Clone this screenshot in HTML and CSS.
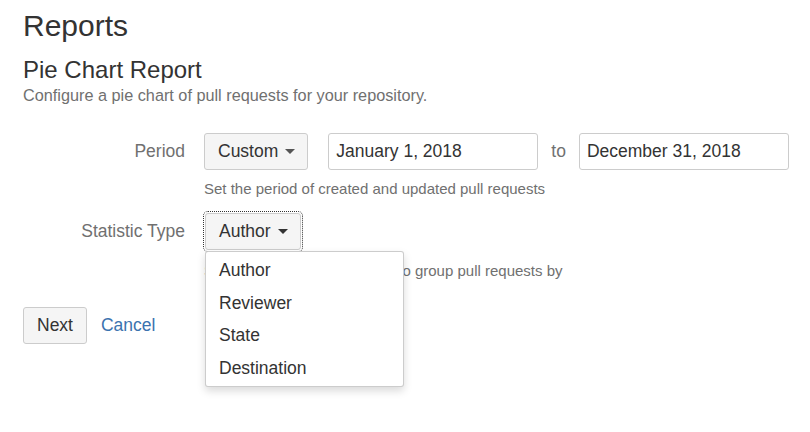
FILE: index.html
```html
<!DOCTYPE html>
<html>
<head>
<meta charset="utf-8">
<title>Reports</title>
<link rel="stylesheet" href="styles.css">
</head>
<body>
<div class="page">
  <h1 class="title">Reports</h1>
  <h3 class="subtitle">Pie Chart Report</h3>
  <p class="desc">Configure a pie chart of pull requests for your repository.</p>

  <form class="form">
    <div class="row">
      <label class="label">Period</label>
      <div class="controls">
        <button type="button" class="btn">Custom<span class="caret"></span></button>
        <input class="input input-first" type="text" value="January 1, 2018">
        <span class="to">to</span>
        <input class="input" type="text" value="December 31, 2018">
      </div>
    </div>
    <div class="help help-1">Set the period of created and updated pull requests</div>

    <div class="row row-2">
      <label class="label">Statistic Type</label>
      <div class="controls">
        <div class="dropdown">
          <button type="button" class="btn btn-focus">Author<span class="caret caret-dark"></span></button>
          <ul class="menu">
            <li class="menu-item">Author</li>
            <li class="menu-item">Reviewer</li>
            <li class="menu-item">State</li>
            <li class="menu-item">Destination</li>
          </ul>
        </div>
      </div>
    </div>
    <div class="help help-2">Select the statistic type used to group pull requests by</div>

    <div class="actions">
      <button type="button" class="btn btn-next">Next</button>
      <a class="cancel" href="#">Cancel</a>
    </div>
  </form>
</div>
</body>
</html>
```

FILE: styles.css
```css
html, body {
  margin: 0;
  padding: 0;
  background: #ffffff;
}

body {
  font-family: "Liberation Sans", Arial, sans-serif;
  color: #333333;
}

.page {
  min-height: 432px;
  box-sizing: border-box;
  padding: 8px 0 0 23px;
}

.title {
  margin: 0;
  font-size: 30px;
  line-height: 36px;
  font-weight: normal;
  color: #333333;
}

.subtitle {
  margin: 12px 0 0 0;
  font-size: 24px;
  line-height: 28px;
  font-weight: normal;
  color: #333333;
}

.desc {
  margin: 1px 0 0 0;
  font-size: 16.25px;
  line-height: 20px;
  color: #707070;
}

.form {
  margin: 28px 0 0 0;
}

.row {
  display: flex;
  align-items: center;
  height: 37px;
}

.row-2 {
  margin-top: 14px;
}

.label {
  width: 162px;
  margin-right: 19px;
  text-align: right;
  font-size: 17.5px;
  color: #707070;
}

.controls {
  display: flex;
  align-items: center;
  height: 37px;
}

.btn {
  display: inline-flex;
  align-items: center;
  height: 37px;
  box-sizing: border-box;
  padding: 0 12px 0 13px;
  margin: 0;
  font-family: "Liberation Sans", Arial, sans-serif;
  font-size: 17.5px;
  color: #333333;
  background: #f5f5f5;
  border: 1px solid #cccccc;
  border-radius: 3px;
  cursor: pointer;
}

.btn-focus {
  outline: 1px dotted #333333;
  outline-offset: 1px;
}

.caret {
  display: inline-block;
  width: 0;
  height: 0;
  margin-left: 7px;
  border-top: 5px solid #555555;
  border-left: 5px solid transparent;
  border-right: 5px solid transparent;
}

.caret-dark {
  border-top-color: #333333;
}

.input {
  width: 210px;
  height: 37px;
  box-sizing: border-box;
  margin: 0;
  padding: 0 7px;
  font-family: "Liberation Sans", Arial, sans-serif;
  font-size: 17.5px;
  color: #333333;
  background: #ffffff;
  border: 1px solid #cccccc;
  border-radius: 3px;
}

.input-first {
  margin-left: 20px;
}

.to {
  margin: 0 13px;
  font-size: 17.5px;
  color: #707070;
}

.help {
  margin-left: 181px;
  font-size: 15px;
  line-height: 20px;
  color: #707070;
}

.help-1 {
  margin-top: 9px;
}

.help-2 {
  margin-top: 11px;
}

.dropdown {
  position: relative;
  margin-left: 1px;
}

.menu {
  position: absolute;
  top: 38px;
  left: 0;
  width: 199px;
  box-sizing: border-box;
  margin: 0;
  padding: 2px 0;
  list-style: none;
  background: #ffffff;
  border: 1px solid rgba(0, 0, 0, 0.2);
  border-radius: 3px;
  box-shadow: 0 4px 8px rgba(0, 0, 0, 0.15);
  z-index: 10;
}

.menu-item {
  height: 32.5px;
  line-height: 32.5px;
  padding: 0 13px;
  font-size: 17.5px;
  color: #333333;
  white-space: nowrap;
}

.actions {
  display: flex;
  align-items: center;
  margin-top: 26px;
}

.btn-next {
  padding: 0 13px;
}

.cancel {
  margin-left: 14px;
  font-size: 17.5px;
  color: #3b73af;
  text-decoration: none;
}
```
